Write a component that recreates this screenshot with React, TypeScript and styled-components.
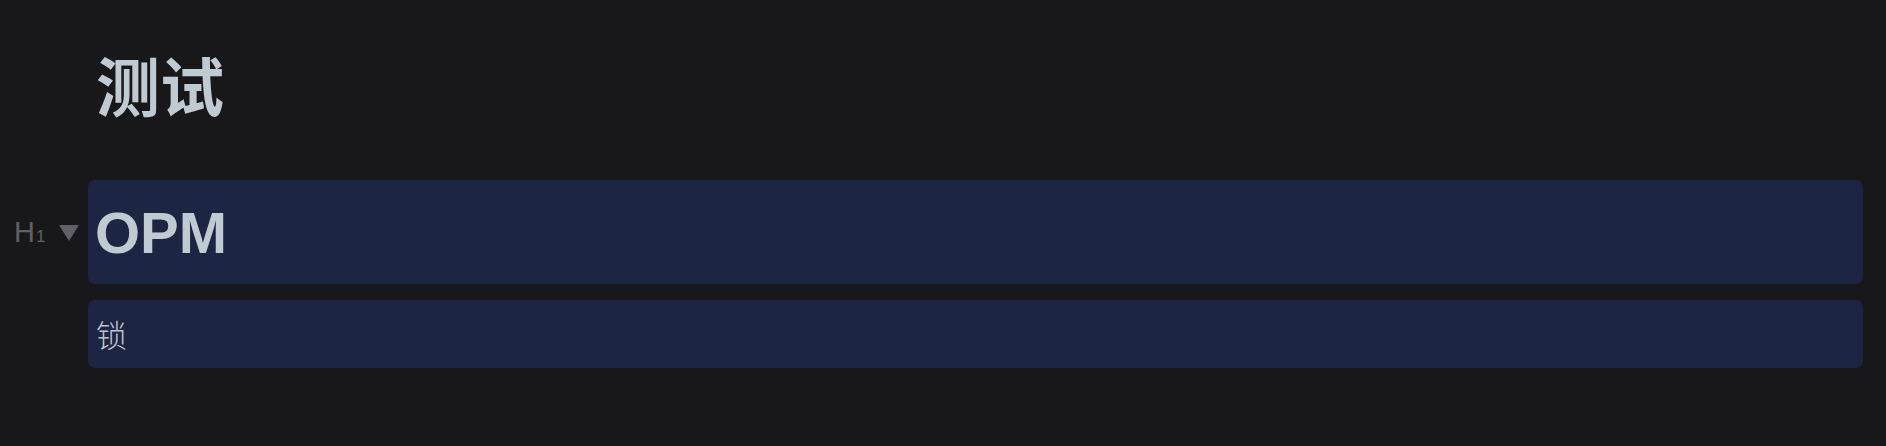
import styled, { createGlobalStyle } from "styled-components";

const GlobalStyle = createGlobalStyle`
  html, body {
    margin: 0;
    padding: 0;
    background: #18181b;
  }
  body {
    font-family: "Liberation Sans", "Noto Sans CJK SC", sans-serif;
    color: #c0cad3;
  }
`;

const Page = styled.div`
  width: 1886px;
  height: 446px;
  box-sizing: border-box;
  padding: 46px 23px 0 0;
  display: flex;
  flex-direction: column;
`;

const Title = styled.h1`
  margin: 0 0 0 88px;
  padding: 2px 0 0 8px;
  font-family: "Liberation Sans", "Noto Sans CJK SC", sans-serif;
  font-size: 64px;
  font-weight: 700;
  line-height: 82px;
  height: 84px;
  box-sizing: border-box;
  color: #c0cad3;
`;

const Blocks = styled.div`
  margin-top: 50px;
  display: flex;
  flex-direction: column;
  gap: 16px;
`;

const Row = styled.div`
  display: flex;
  align-items: stretch;
`;

const Gutter = styled.div`
  width: 88px;
  flex: none;
  display: flex;
  align-items: center;
  padding-left: 14px;
  box-sizing: border-box;
  gap: 14px;
  color: #5f6166;
`;

const Marker = styled.span`
  font-family: "Liberation Sans", sans-serif;
  font-size: 29px;
  line-height: 1;
  display: flex;
  align-items: baseline;
  sub {
    font-size: 17px;
    vertical-align: baseline;
    margin-left: 1px;
  }
`;

const Caret = styled.span`
  width: 0;
  height: 0;
  border-left: 10px solid transparent;
  border-right: 10px solid transparent;
  border-top: 16px solid #5f6166;
  margin-top: 1px;
`;

const Block = styled.div<{ $h: number }>`
  flex: 1;
  height: ${(p) => p.$h}px;
  background: #1c2541;
  border-radius: 7px;
  display: flex;
  align-items: center;
  padding-left: 6px;
  box-sizing: border-box;
`;

const Heading = styled.span`
  font-family: "Liberation Sans", "Noto Sans CJK SC", sans-serif;
  font-weight: 700;
  font-size: 58px;
  color: #c0cad3;
  margin-left: 1px;
`;

const Text = styled.span`
  font-family: "Noto Sans CJK SC", sans-serif;
  font-weight: 300;
  font-size: 31px;
  color: #bcc6d0;
  margin-left: 2px;
  margin-top: -2px;
`;

export default function App() {
  return (
    <>
      <GlobalStyle />
      <Page>
        <Title>测试</Title>
        <Blocks>
          <Row>
            <Gutter>
              <Marker>
                H<sub>1</sub>
              </Marker>
              <Caret />
            </Gutter>
            <Block $h={104}>
              <Heading>OPM</Heading>
            </Block>
          </Row>
          <Row>
            <Gutter />
            <Block $h={68}>
              <Text>锁</Text>
            </Block>
          </Row>
        </Blocks>
      </Page>
    </>
  );
}
